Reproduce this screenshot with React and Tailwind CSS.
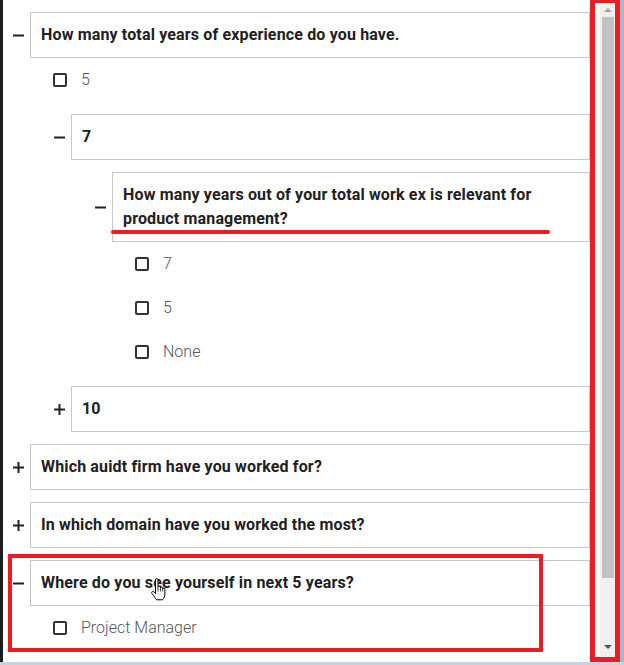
import React from 'react';

const PAD = ['pl-[10px]', 'pl-[51px]', 'pl-[92px]'];
const OPT_PAD = ['pl-[50px]', 'pl-[91px]', 'pl-[132px]'];

const Sign = ({ open }) => (
  <svg width="11" height="11" viewBox="0 0 11 11" className="shrink-0 mr-[6px]">
    <rect x="0" y="4.5" width="11" height="2" fill="#222" />
    {!open && <rect x="4.5" y="0" width="2" height="11" fill="#222" />}
  </svg>
);

const Question = ({ depth = 0, open, children, className = '' }) => (
  <div className={`flex items-center ${PAD[depth]} ${className}`}>
    <Sign open={open} />
    <div className="flex-1 border border-[#c6c6c6] px-[10px] py-[10px] text-[16px] leading-6 tracking-[0.15px] font-bold text-[#212121]">
      {children}
    </div>
  </div>
);

const Option = ({ depth = 0, label }) => (
  <div className={`flex items-center h-[44px] ${OPT_PAD[depth]}`}>
    <span className="w-[14px] h-[14px] border-2 border-[#333] rounded-[2px] shrink-0" />
    <span className="ml-[14px] text-[16px] font-light text-[#555]">{label}</span>
  </div>
);

const HandCursor = () => (
  <svg width="18" height="24" viewBox="0 0 18 24" className="absolute left-[147px] top-[578px]">
    <path
      d="M5.5 1.8C5.5 1 6.1.6 6.8.6 7.5.6 8 1 8 1.8V9C8 8.3 8.6 8 9.2 8c.7 0 1.2.4 1.2 1.1v.8c0-.6.6-.9 1.2-.9.6 0 1.1.4 1.1 1.1v.8c0-.6.6-.9 1.1-.9.6 0 1.1.4 1.1 1.1V16c0 2.6-1.1 4.2-2.4 5.8H6.6C5.6 20.7 3.6 17.6 2.1 15.6c-.6-.8-.5-1.7.2-2.1.7-.4 1.5-.1 2 .6L5.5 15.6Z"
      fill="#fff"
      stroke="#000"
      strokeWidth="1"
      strokeLinejoin="round"
    />
    <path d="M8 9v4.5M10.4 9.9v3.6M12.7 10.8v2.7" stroke="#000" strokeWidth="0.8" />
  </svg>
);

export default function App() {
  return (
    <div className="w-[624px] h-[665px] flex flex-col bg-white" style={{ fontFamily: 'Roboto, "Noto Sans", sans-serif' }}>
      <div className="flex h-[662px]">
        <div className="w-[3px] bg-[#1e1e1e]" />

        <div className="relative w-[587px] overflow-hidden bg-white">
          <div className="pt-[12px]">
            <Question open>How many total years of experience do you have.</Question>
            <Option label="5" />
            <Question depth={1} open className="mt-[12px]">7</Question>
            <Question depth={2} open className="mt-[12px]">
              How many years out of your total work ex is relevant for product management?
            </Question>
            <Option depth={2} label="7" />
            <Option depth={2} label="5" />
            <Option depth={2} label="None" />
            <Question depth={1} className="mt-[12px]">10</Question>
            <Question className="mt-[12px]">Which auidt firm have you worked for?</Question>
            <Question className="mt-[12px]">In which domain have you worked the most?</Question>
            <Question open className="mt-[12px]">Where do you see yourself in next 5 years?</Question>
            <Option label="Project Manager" />
          </div>

          {/* annotations */}
          <div className="absolute left-[108px] top-[230px] w-[439px] h-[4px] rounded-full bg-[#ec1c24]" />
          <div className="absolute left-[5px] top-[554px] w-[535px] h-[98px] border-4 border-[#ec1c24]" />
          <HandCursor />
        </div>

        <div className="w-[30px] h-full border-x-[5px] border-t-[3px] border-b-[5px] border-[#ec1c24] bg-[#f7f7f7] flex">
          <div className="ml-[5px] w-[15px] h-full bg-[#f0f0f0] flex flex-col items-center">
            <div className="h-[14px] flex items-center justify-center">
              <span className="w-0 h-0 border-x-[4px] border-x-transparent border-b-[4px] border-b-[#a3a3a3]" />
            </div>
            <div className="w-[12px] h-[561px] bg-[#c1c1c1]" />
            <div className="flex-1" />
            <div className="h-[12px] flex items-start justify-center">
              <span className="w-0 h-0 border-x-[4px] border-x-transparent border-t-[4px] border-t-[#505050]" />
            </div>
          </div>
        </div>

        <div className="w-[4px] bg-[#a9b5c8]" />
      </div>
      <div className="h-[3px] bg-[#c9d3df]" />
    </div>
  );
}
